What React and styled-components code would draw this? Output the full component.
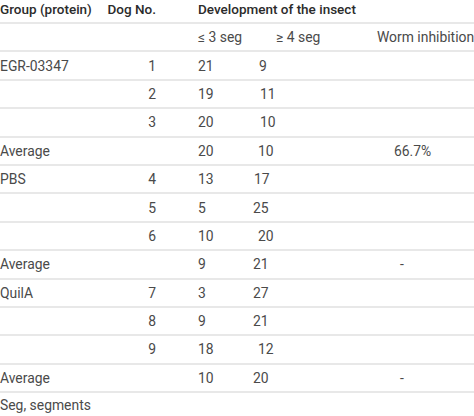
import React from 'react';
import styled, { createGlobalStyle } from 'styled-components';

const GlobalStyle = createGlobalStyle`
  body {
    margin: 0;
    background: #fff;
    font-family: Roboto, "Liberation Sans", sans-serif;
  }
`;

// hs = indent of the ">= 4 seg" value, ws = indent of the worm inhibition value
const rows = [
    { group: 'EGR-03347', dog: '1', low: '21', high: '9', hs: 6 },
    { group: '', dog: '2', low: '19', high: '11', hs: 7 },
    { group: '', dog: '3', low: '20', high: '10', hs: 7 },
    { group: 'Average', dog: '', low: '20', high: '10', hs: 5, worm: '66.7%', ws: 17 },
    { group: 'PBS', dog: '4', low: '13', high: '17', hs: 1 },
    { group: '', dog: '5', low: '5', high: '25', hs: 0 },
    { group: '', dog: '6', low: '10', high: '20', hs: 5 },
    { group: 'Average', dog: '', low: '9', high: '21', hs: 0, worm: '-', ws: 23 },
    { group: 'QuilA', dog: '7', low: '3', high: '27', hs: 0 },
    { group: '', dog: '8', low: '9', high: '21', hs: 0 },
    { group: '', dog: '9', low: '18', high: '12', hs: 5 },
    { group: 'Average', dog: '', low: '10', high: '20', hs: 0, worm: '-', ws: 23 },
];

const App = () => {
    document.title = 'Table';

    return (
        <>
            <GlobalStyle />
            <Table>
                <HeadRow>
                    <HeadCell>Group (protein)</HeadCell>
                    <HeadCell $right>Dog No.</HeadCell>
                    <HeadCell $indent={42}>Development of the insect</HeadCell>
                </HeadRow>
                <Row>
                    <Cell />
                    <Cell />
                    <Cell $indent={42}>≤ 3 seg</Cell>
                    <Cell $indent={23}>≥ 4 seg</Cell>
                    <Cell>Worm inhibition</Cell>
                </Row>
                {rows.map((r, i) => (
                    <Row key={i}>
                        <Cell>{r.group}</Cell>
                        <Cell $right>{r.dog}</Cell>
                        <Cell $indent={42}>{r.low}</Cell>
                        <Cell $indent={r.hs}>{r.high}</Cell>
                        <Cell $indent={r.ws}>{r.worm}</Cell>
                    </Row>
                ))}
                <Note>Seg, segments</Note>
            </Table>
        </>
    );
};

export default App;

const Table = styled.div`
display: flex;
flex-direction: column;
width: 474px;
overflow: hidden;
font-size: 13.9px;
color: #4a4a4a;
`;

const HeadRow = styled.div`
display: grid;
grid-template-columns: 107px 49px 1fr;
height: 24px;
box-sizing: border-box;
border-bottom: 2px solid #e8e8e8;
align-items: center;
`;

const HeadCell = styled.div`
font-weight: 500;
font-size: 13.5px;
color: #2b2b2b;
white-space: nowrap;
text-align: ${p => (p.$right ? 'right' : 'left')};
padding-left: ${p => p.$indent || 0}px;
margin-top: -5px;
`;

const Row = styled.div`
display: grid;
grid-template-columns: 107px 49px 97px 124px 1fr;
height: 28.4px;
box-sizing: border-box;
border-bottom: 2px solid #e8e8e8;
align-items: center;
`;

const Cell = styled.div`
white-space: nowrap;
text-align: ${p => (p.$right ? 'right' : 'left')};
padding-left: ${p => p.$indent || 0}px;
`;

const Note = styled.div`
padding-top: 4px;
white-space: nowrap;
`;
